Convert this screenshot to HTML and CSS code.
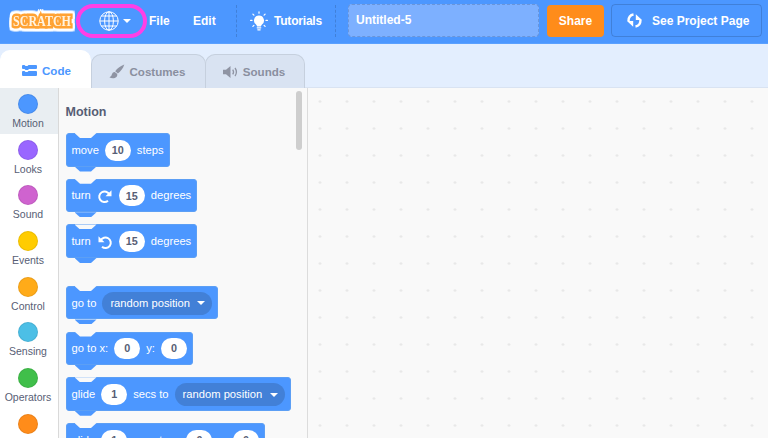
FILE: index.html
```html
<!DOCTYPE html>
<html lang="en">
<head>
<meta charset="utf-8">
<title>Scratch</title>
<link rel="stylesheet" href="styles.css">
</head>
<body>
<div class="app">
  <header class="nav">
    <div class="logo"><span class="logo-text">SCRATCH</span></div>
    <div class="lang">
      <svg class="globe" width="20" height="20" viewBox="0 0 20 20" fill="none" stroke="#fff" stroke-width="1">
        <circle cx="10" cy="10" r="9.2"/>
        <ellipse cx="10" cy="10" rx="4.4" ry="9.2"/>
        <path d="M10 .8v18.4M.8 10h18.4M2.400 5h15.200M2.400 15h15.200"/>
      </svg>
      <span class="caret"></span>
    </div>
    <span class="nav-item nav-file">File</span>
    <span class="nav-item nav-edit">Edit</span>
    <span class="nav-sep"></span>
    <div class="tutorials">
      <svg width="18" height="20" viewBox="0 0 18 20" fill="none" stroke="#fff" stroke-linecap="round">
        <path d="M9 4.500a5 5 0 0 0-3 9c.7.6 1 1.200 1 2h4c0-.8.3-1.400 1-2a5 5 0 0 0-3-9z" fill="#fff" stroke="none"/>
        <path d="M7.200 16.800h3.600M7.800 18.800h2.400" stroke-width="1.200"/>
        <path d="M9 .8v1.400M2.900 3.200l1 1M15.100 3.200l-1 1M.6 9.400h1.400M16 9.400h1.400M2.900 15.400l1-1M15.100 15.400l-1-1" stroke-width="1.200"/>
      </svg>
      <span class="nav-item">Tutorials</span>
    </div>
    <span class="nav-sep"></span>
    <div class="title-input">Untitled-5</div>
    <div class="share">Share</div>
    <div class="see-page">
      <svg width="15" height="15" viewBox="0 0 15 15" fill="#fff">
        <g>
          <path d="M6.500 1.500C3.200 2 1.500 4.500 1.500 8" fill="none" stroke="#fff" stroke-width="2.400"/>
          <path d="M0 8h6.200v5.800z"/>
        </g>
        <g transform="rotate(180 7.500 7.500)">
          <path d="M6.500 1.500C3.200 2 1.500 4.500 1.500 8" fill="none" stroke="#fff" stroke-width="2.400"/>
          <path d="M0 8h6.200v5.800z"/>
        </g>
      </svg>
      <span>See Project Page</span>
    </div>
  </header>
  <div class="tabs">
    <div class="tab tab-active tab-code">
      <svg width="15" height="11" viewBox="0 0 15 11" fill="#4c97ff">
        <path d="M0 1a1 1 0 0 1 1-1h1.500l1 1h2l1-1H14a1 1 0 0 1 1 1v2a1 1 0 0 1-1 1H7l-1 1H3.500l-1-1H1a1 1 0 0 1-1-1z"/>
        <path d="M0 7a1 1 0 0 1 1-1h1.500l1 1h2l1-1H14a1 1 0 0 1 1 1v3a1 1 0 0 1-1 1H1a1 1 0 0 1-1-1z"/>
      </svg>
      <span>Code</span>
    </div>
    <div class="tab tab-costumes">
      <svg width="16" height="16" viewBox="0 0 16 16" fill="#8f94a3">
        <path d="M15.300.6C11.800 1.800 8.300 4.400 6.200 7.200l2.700 2.400C11.500 7.500 14.300 4.300 15.300.6z"/>
        <path d="M5.700 8c-1.700.2-2.500 1.200-2.900 2.600C2.500 11.900 1.800 12.700.4 13.200c1.800 1.500 5.300 1.500 7-.2 1-1 1.200-2.400.6-3.300z"/>
      </svg>
      <span>Costumes</span>
    </div>
    <div class="tab tab-sounds">
      <svg width="16" height="14" viewBox="0 0 16 14" fill="#8f94a3">
        <path d="M0 4.800h3L7.500 1v12L3 9.200H0z"/>
        <path d="M9.700 4.600c1 1.400 1 3.400 0 4.800M12 3c1.700 2.400 1.700 5.600 0 8" fill="none" stroke="#8f94a3" stroke-width="1.300"/>
      </svg>
      <span>Sounds</span>
    </div>
  </div>
  <main class="editor">
    <nav class="cats">
      <div class="cat cat-active"><span class="dot dot-motion"></span><span>Motion</span></div>
      <div class="cat"><span class="dot dot-looks"></span><span>Looks</span></div>
      <div class="cat"><span class="dot dot-sound"></span><span>Sound</span></div>
      <div class="cat"><span class="dot dot-events"></span><span>Events</span></div>
      <div class="cat"><span class="dot dot-control"></span><span>Control</span></div>
      <div class="cat"><span class="dot dot-sensing"></span><span>Sensing</span></div>
      <div class="cat"><span class="dot dot-operators"></span><span>Operators</span></div>
      <div class="cat"><span class="dot dot-variables"></span></div>
    </nav>
    <section class="palette">
      <h2 class="palette-title">Motion</h2>
      <div class="block"><span>move</span><span class="num">10</span><span>steps</span></div>
      <div class="block"><span>turn</span><svg class="turn" width="16" height="16" viewBox="0 0 16 16" fill="none" stroke="#fff" stroke-width="2"><path d="M12.300 6.500A5.300 5.300 0 1 0 11 12.800"/><path d="M14.500 2.200v6h-6z" fill="#fff" stroke="none"/></svg><span class="num">15</span><span>degrees</span></div>
      <div class="block block-group-end"><span>turn</span><svg class="turn" width="16" height="16" viewBox="0 0 16 16" fill="none" stroke="#fff" stroke-width="2"><path d="M3.700 6.500A5.300 5.300 0 1 1 5 12.800"/><path d="M1.500 2.200v6h6z" fill="#fff" stroke="none"/></svg><span class="num">15</span><span>degrees</span></div>
      <div class="block"><span>go to</span><span class="drop"><span>random position</span><span class="caret"></span></span></div>
      <div class="block"><span>go to x:</span><span class="num">0</span><span>y:</span><span class="num">0</span></div>
      <div class="block"><span>glide</span><span class="num">1</span><span>secs to</span><span class="drop"><span>random position</span><span class="caret"></span></span></div>
      <div class="block block-last"><span>glide</span><span class="num">1</span><span>secs to x:</span><span class="num">0</span><span>y:</span><span class="num">0</span></div>
      <div class="scrollbar"></div>
    </section>
    <section class="workspace"></section>
  </main>
</div>
</body>
</html>
```
FILE: styles.css
```css
* { box-sizing: border-box; }
html, body { margin: 0; padding: 0; height: 100%; overflow: hidden; }
body { font-family: "Liberation Sans", Arial, sans-serif; background: #e3eefe; }
.app { width: 768px; height: 438px; display: flex; flex-direction: column; overflow: hidden; position: relative; }

.nav { height: 44px; flex: none; padding-bottom: 2px; background: #4c97ff; color: #fff; display: flex; align-items: center; font-size: 12px; font-weight: bold; border-bottom: 1px solid #5aa0ff; }
.logo { width: 76px; padding-left: 12px; flex: none; position: relative; }
.logo-text { display: block; width: 60px; height: 20px; line-height: 20px; text-align: center; font-family: "Liberation Serif", serif; font-size: 12px; font-weight: bold; color: #fff3e0; -webkit-text-stroke: 4px #ffa233; paint-order: stroke fill; transform: scaleY(1.3); filter: drop-shadow(2px 0 0 #fff) drop-shadow(-2px 0 0 #fff) drop-shadow(0 2px 0 #fff) drop-shadow(0 -2px 0 #fff); }
.lang { width: 71px; height: 34px; flex: none; display: flex; align-items: center; gap: 4px; border: 4px solid #ff3fe6; border-radius: 17px; padding-left: 18.700px; }
.caret { display: inline-block; width: 0; height: 0; border-left: 4px solid transparent; border-right: 4px solid transparent; border-top: 4px solid #fff; flex: none; }
.nav-item { display: block; }
.nav-file { margin-left: 2px; width: 44px; }
.nav-edit { width: 43px; }
.nav-sep { width: 0; height: 32px; border-left: 1px dashed rgba(0, 0, 0, .15); flex: none; }
.tutorials { width: 98px; display: flex; align-items: center; gap: 6px; padding-left: 13px; letter-spacing: -.2px; }
.title-input { width: 191px; height: 33px; margin-left: 12px; background: #7db0ff; border: 1px dashed rgba(0, 0, 0, .15); border-radius: 4px; line-height: 31px; padding-left: 7px; flex: none; }
.share { width: 57px; height: 32px; margin-left: 8px; background: #ff8c1a; border-radius: 4px; text-align: center; line-height: 32px; flex: none; }
.see-page { width: 151px; height: 33px; margin-left: 7px; border: 1px solid rgba(0, 0, 0, .15); border-radius: 4px; display: flex; align-items: center; gap: 10px; padding-left: 15px; flex: none; }

.tabs { height: 44px; flex: none; display: flex; align-items: flex-end; background: #e3eefe; border-bottom: 1px solid #d9e3f2; }
.tab { height: 34px; display: flex; align-items: center; justify-content: center; gap: 4px; padding-right: 2px; font-size: 11.600px; font-weight: bold; color: #8a8f9f; background: #d9e3f2; border: 1px solid #c6d0de; border-bottom: 0; border-radius: 10px 10px 0 0; flex: none; margin-bottom: -1px; }
.tab-active { height: 38px; gap: 5px; padding: 1px 0 0 2px; background: #fff; color: #4c97ff; border-color: #fff; position: relative; z-index: 1; }
.tab-code { width: 91px; }
.tab-costumes { width: 115px; }
.tab-sounds { width: 100px; margin-left: -1px; }

.editor { flex: 1; display: flex; min-height: 0; }
.cats { width: 59px; flex: none; background: #fff; border-right: 1px solid #d9d9d9; padding-right: 2px; display: flex; flex-direction: column; }
.cat { height: 45.700px; flex: none; display: flex; flex-direction: column; align-items: center; padding-top: 6px; gap: 3px; font-size: 10.500px; line-height: 12px; color: #575e75; }
.cat-active { background: #e9eef2; margin-right: -2px; padding-right: 2px; }
.dot { width: 20px; height: 20px; border-radius: 50%; flex: none; border: 1px solid rgba(0, 0, 0, .08); }
.dot-motion { background: #4c97ff; }
.dot-looks { background: #9966ff; }
.dot-sound { background: #cf63cf; }
.dot-events { background: #ffcc00; }
.dot-control { background: #ffab19; }
.dot-sensing { background: #4cbfe6; }
.dot-operators { background: #40bf4a; }
.dot-variables { background: #ff8c1a; }

.palette { width: 249px; flex: none; background: #f9f9f9; border-right: 1px solid #dcdcdc; padding: 17px 0 0 6.500px; position: relative; overflow: hidden; }
.palette-title { margin: 0 0 13px; font-size: 12.500px; line-height: 15px; font-weight: bold; color: #575e75; }
.block { width: max-content; height: 33.500px; margin-bottom: 12.200px; padding: 1px 5px 0; background: #4c97ff; border: 1px solid #5c9ff5; border-radius: 3px; color: #fff; font-size: 11.200px; line-height: 1; display: flex; align-items: center; gap: 6px; position: relative; white-space: nowrap; }
.block::before { content: ""; position: absolute; left: 8px; top: -1px; width: 22px; height: 5px; background: #f9f9f9; clip-path: polygon(0 0, 100% 0, 75% 100%, 25% 100%); }
.block::after { content: ""; position: absolute; left: 8px; bottom: -6px; width: 22px; height: 5px; background: #4c97ff; clip-path: polygon(0 0, 100% 0, 75% 100%, 25% 100%); }
.block-group-end { margin-bottom: 28px; }
.block-last { margin-bottom: 0; }
.num { width: 26px; height: 21px; background: #fff; border-radius: 11px; color: #575e75; display: flex; align-items: center; justify-content: center; font-size: 10.800px; font-weight: bold; flex: none; }
.drop { height: 23px; width: 110px; padding: 0 7px 0 8px; background: #4280d7; border-radius: 12px; display: flex; align-items: center; justify-content: space-between; flex: none; }
.turn { flex: none; }
.scrollbar { position: absolute; right: 5px; top: 3px; width: 6px; height: 59px; border-radius: 3px; background: #cecece; }

.workspace { flex: 1; background-color: #f9f9f9; background-image: radial-gradient(circle, #e8e8e8 1px, transparent 1.500px); background-size: 27px 27px; background-position: -1.500px 0; }
```
